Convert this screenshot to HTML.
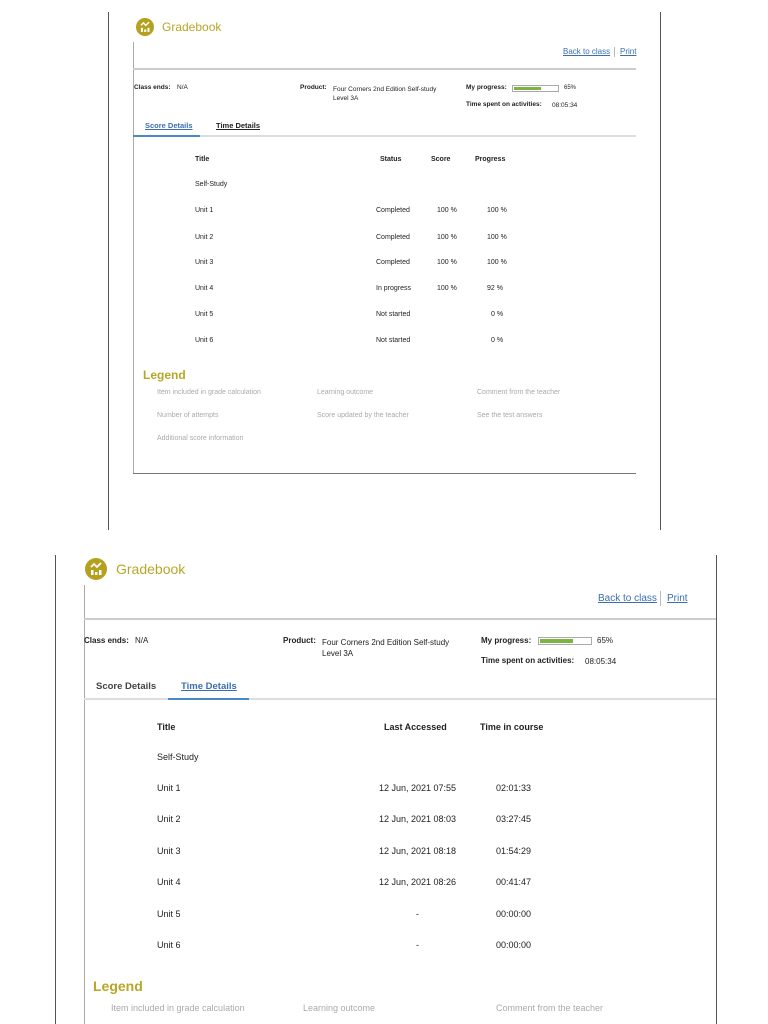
<!DOCTYPE html>
<html><head><meta charset="utf-8"><style>
body{margin:0;width:768px;height:1024px;background:#fff;position:relative;overflow:hidden;font-family:"Liberation Sans",Arial,sans-serif;color:#222}
div,span,svg{position:absolute}
span{line-height:1;white-space:nowrap}
.l{background:#555}
.g{background:#ddd}
.b{font-weight:bold}
.lk{color:#3a6fb0;text-decoration:underline}
.gold{color:#b8a628}
.lg{color:#aaa}
</style></head><body>
<!-- TOP PANEL -->
<div class="l" style="left:108px;top:12px;width:1px;height:518px"></div>
<div class="l" style="left:660px;top:12px;width:1px;height:518px"></div>
<div style="left:133px;top:42px;width:1px;height:432px;background:#aaa"></div>
<div style="left:133px;top:68px;width:503px;height:2px;background:#ccc"></div>
<div style="left:133px;top:473px;width:503px;height:1px;background:#777"></div>
<svg style="left:136px;top:18px" width="18" height="18" viewBox="0 0 22 22"><circle cx="11" cy="11" r="11" fill="#b5a020"/><path d="M6 9l3-3 3 3 4-4" stroke="#fff" stroke-width="1.8" fill="none"/><rect x="6" y="12" width="2.5" height="5" fill="#fff"/><rect x="10" y="14" width="2.5" height="3" fill="#fff"/><rect x="14" y="12" width="2.5" height="5" fill="#fff"/></svg>
<span class="gold" style="left:162px;top:21px;font-size:12px">Gradebook</span>
<span class="lk" style="left:563px;top:48px;font-size:8px">Back to class</span>
<div style="left:614px;top:47px;width:1px;height:10px;background:#bbb"></div>
<span class="lk" style="left:620px;top:48px;font-size:8px">Print</span>
<span class="b" style="left:134px;top:85px;font-size:6.5px">Class ends:</span>
<span style="left:177px;top:85px;font-size:6.5px">N/A</span>
<span class="b" style="left:300px;top:85px;font-size:6.5px">Product:</span>
<span style="left:333px;top:85px;font-size:6.5px;line-height:9px">Four Corners 2nd Edition Self-study<br>Level 3A</span>
<span class="b" style="left:466px;top:85px;font-size:6.5px">My progress:</span>
<div style="left:512px;top:85px;width:45px;height:5px;border:1px solid #aaa"></div>
<div style="left:514px;top:87px;width:27px;height:3px;background:#7cb342"></div>
<span style="left:564px;top:85px;font-size:6px">65%</span>
<span class="b" style="left:466px;top:102px;font-size:6.5px">Time spent on activities:</span>
<span style="left:552px;top:103px;font-size:6.5px">08:05:34</span>
<span class="lk" style="left:145px;top:122px;font-size:7.5px;font-weight:bold">Score Details</span>
<span style="left:216px;top:122px;font-size:7.5px;font-weight:bold;text-decoration:underline">Time Details</span>
<div class="g" style="left:133px;top:135px;width:503px;height:2px"></div>
<div style="left:133px;top:135px;width:67px;height:2px;background:#4a8ac0"></div>
<span class="b" style="left:195px;top:156px;font-size:7px">Title</span>
<span class="b" style="left:380px;top:156px;font-size:7px">Status</span>
<span class="b" style="left:431px;top:156px;font-size:7px">Score</span>
<span class="b" style="left:475px;top:156px;font-size:7px">Progress</span>
<span style="left:195px;top:181px;font-size:7px">Self-Study</span>
<span style="left:195px;top:207px;font-size:7px">Unit 1</span><span style="left:376px;top:207px;font-size:7px">Completed</span><span style="left:437px;top:207px;font-size:7px">100 %</span><span style="left:487px;top:207px;font-size:7px">100 %</span>
<span style="left:195px;top:234px;font-size:7px">Unit 2</span><span style="left:376px;top:234px;font-size:7px">Completed</span><span style="left:437px;top:234px;font-size:7px">100 %</span><span style="left:487px;top:234px;font-size:7px">100 %</span>
<span style="left:195px;top:259px;font-size:7px">Unit 3</span><span style="left:376px;top:259px;font-size:7px">Completed</span><span style="left:437px;top:259px;font-size:7px">100 %</span><span style="left:487px;top:259px;font-size:7px">100 %</span>
<span style="left:195px;top:285px;font-size:7px">Unit 4</span><span style="left:376px;top:285px;font-size:7px">In progress</span><span style="left:437px;top:285px;font-size:7px">100 %</span><span style="left:487px;top:285px;font-size:7px">92 %</span>
<span style="left:195px;top:311px;font-size:7px">Unit 5</span><span style="left:376px;top:311px;font-size:7px">Not started</span><span style="left:491px;top:311px;font-size:7px">0 %</span>
<span style="left:195px;top:337px;font-size:7px">Unit 6</span><span style="left:376px;top:337px;font-size:7px">Not started</span><span style="left:491px;top:337px;font-size:7px">0 %</span>
<span class="gold b" style="left:143px;top:369px;font-size:12px">Legend</span>
<span class="lg" style="left:157px;top:389px;font-size:7px">Item included in grade calculation</span>
<span class="lg" style="left:317px;top:389px;font-size:7px">Learning outcome</span>
<span class="lg" style="left:477px;top:389px;font-size:7px">Comment from the teacher</span>
<span class="lg" style="left:157px;top:412px;font-size:7px">Number of attempts</span>
<span class="lg" style="left:317px;top:412px;font-size:7px">Score updated by the teacher</span>
<span class="lg" style="left:477px;top:412px;font-size:7px">See the test answers</span>
<span class="lg" style="left:157px;top:435px;font-size:7px">Additional score information</span>

<!-- BOTTOM PANEL -->
<div class="l" style="left:55px;top:555px;width:1px;height:469px"></div>
<div class="l" style="left:716px;top:555px;width:1px;height:469px"></div>
<div style="left:84px;top:585px;width:1px;height:439px;background:#aaa"></div>
<div style="left:84px;top:618px;width:632px;height:2px;background:#ccc"></div>
<svg style="left:85px;top:558px" width="22" height="22" viewBox="0 0 22 22"><circle cx="11" cy="11" r="11" fill="#b5a020"/><path d="M6 9l3-3 3 3 4-4" stroke="#fff" stroke-width="1.8" fill="none"/><rect x="6" y="12" width="2.5" height="5" fill="#fff"/><rect x="10" y="14" width="2.5" height="3" fill="#fff"/><rect x="14" y="12" width="2.5" height="5" fill="#fff"/></svg>
<span class="gold" style="left:116px;top:562px;font-size:14px">Gradebook</span>
<span class="lk" style="left:598px;top:594px;font-size:10px">Back to class</span>
<div style="left:660px;top:591px;width:1px;height:15px;background:#bbb"></div>
<span class="lk" style="left:667px;top:594px;font-size:10px">Print</span>
<span class="b" style="left:84px;top:637px;font-size:8px">Class ends:</span>
<span style="left:135px;top:637px;font-size:8px">N/A</span>
<span class="b" style="left:283px;top:637px;font-size:8px">Product:</span>
<span style="left:322px;top:637px;font-size:8px;line-height:11px">Four Corners 2nd Edition Self-study<br>Level 3A</span>
<span class="b" style="left:481px;top:637px;font-size:8px">My progress:</span>
<div style="left:538px;top:637px;width:52px;height:6px;border:1px solid #aaa"></div>
<div style="left:540px;top:639px;width:33px;height:4px;background:#7cb342"></div>
<span style="left:597px;top:637px;font-size:8px">65%</span>
<span class="b" style="left:481px;top:657px;font-size:8px">Time spent on activities:</span>
<span style="left:585px;top:658px;font-size:8px">08:05:34</span>
<span style="left:96px;top:682px;font-size:9.5px;font-weight:bold;color:#444">Score Details</span>
<span class="lk" style="left:181px;top:682px;font-size:9.5px;font-weight:bold">Time Details</span>
<div class="g" style="left:84px;top:698px;width:632px;height:2px"></div>
<div style="left:168px;top:698px;width:81px;height:2px;background:#4a8ac0"></div>
<span class="b" style="left:157px;top:723px;font-size:9px">Title</span>
<span class="b" style="left:384px;top:723px;font-size:9px">Last Accessed</span>
<span class="b" style="left:480px;top:723px;font-size:9px">Time in course</span>
<span style="left:157px;top:753px;font-size:9px">Self-Study</span>
<span style="left:157px;top:784px;font-size:9px">Unit 1</span><span style="left:379px;top:784px;font-size:9px">12 Jun, 2021 07:55</span><span style="left:496px;top:784px;font-size:9px">02:01:33</span>
<span style="left:157px;top:815px;font-size:9px">Unit 2</span><span style="left:379px;top:815px;font-size:9px">12 Jun, 2021 08:03</span><span style="left:496px;top:815px;font-size:9px">03:27:45</span>
<span style="left:157px;top:847px;font-size:9px">Unit 3</span><span style="left:379px;top:847px;font-size:9px">12 Jun, 2021 08:18</span><span style="left:496px;top:847px;font-size:9px">01:54:29</span>
<span style="left:157px;top:878px;font-size:9px">Unit 4</span><span style="left:379px;top:878px;font-size:9px">12 Jun, 2021 08:26</span><span style="left:496px;top:878px;font-size:9px">00:41:47</span>
<span style="left:157px;top:910px;font-size:9px">Unit 5</span><span style="left:416px;top:910px;font-size:9px">-</span><span style="left:496px;top:910px;font-size:9px">00:00:00</span>
<span style="left:157px;top:941px;font-size:9px">Unit 6</span><span style="left:416px;top:941px;font-size:9px">-</span><span style="left:496px;top:941px;font-size:9px">00:00:00</span>
<span class="gold b" style="left:93px;top:979px;font-size:14px">Legend</span>
<span class="lg" style="left:111px;top:1004px;font-size:9px">Item included in grade calculation</span>
<span class="lg" style="left:303px;top:1004px;font-size:9px">Learning outcome</span>
<span class="lg" style="left:496px;top:1004px;font-size:9px">Comment from the teacher</span>
</body></html>
